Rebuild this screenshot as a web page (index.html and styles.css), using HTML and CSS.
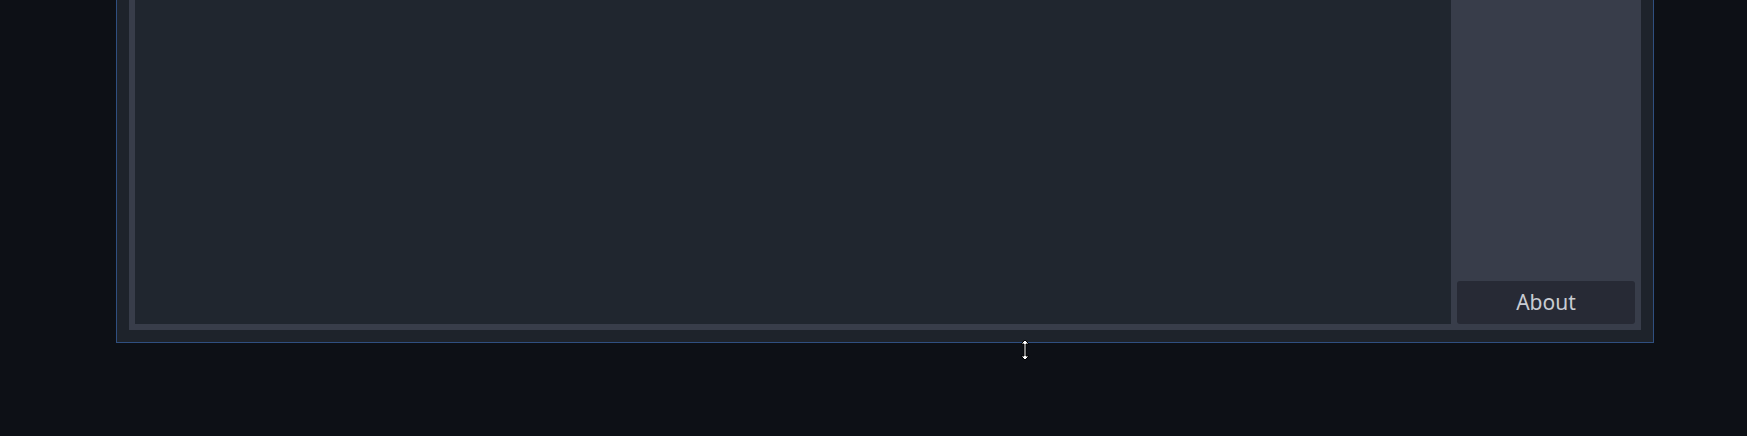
FILE: index.html
```html
<!DOCTYPE html>
<html>
<head>
    <title>Project Manager</title>
    <link rel="stylesheet" href="styles.css">
</head>
<body>
    <div class="window">
        <div class="panel">
            <div class="project-list"></div>
            <div class="sidebar">
                <button class="side-button">About</button>
            </div>
        </div>
    </div>

    <!-- mouse cursor (vertical resize) -->
    <svg class="cursor" width="10" height="22" viewBox="0 0 10 22">
        <path d="M5 1 L9 5 L6 5 L6 17 L9 17 L5 21 L1 17 L4 17 L4 5 L1 5 Z" fill="#fff" stroke="#000" stroke-width="1" stroke-linejoin="miter"/>
    </svg>
</body>
</html>
```
FILE: styles.css
```css
body {
    margin: 0;
    padding: 0;
    height: 436px;
    overflow: hidden;
    background-color: #0d1016;
    font-family: "Noto Sans", "Open Sans", sans-serif;
    position: relative;
}

.window {
    margin-left: 116px;
    width: 1538px;
    height: 343px;
    padding: 0 12px 12px 12px;
    box-sizing: border-box;
    background-color: #1e232b;
    border: 1px solid #2f4f80;
    border-top: none;
}

.panel {
    display: flex;
    gap: 6px;
    height: 100%;
    padding: 0 6px 6px 6px;
    box-sizing: border-box;
    background-color: #383d4a;
}

.project-list {
    flex: 1;
    background-color: #20262f;
}

.sidebar {
    width: 178px;
    display: flex;
    flex-direction: column;
    justify-content: flex-end;
}

.side-button {
    height: 43px;
    width: 100%;
    border: none;
    border-radius: 3px;
    background-color: #272a35;
    color: #c9ccd2;
    font-family: "Noto Sans", "Open Sans", sans-serif;
    font-size: 21px;
    padding: 0 0 2px 0;
}

.cursor {
    position: absolute;
    left: 1020px;
    top: 339px;
}
```
